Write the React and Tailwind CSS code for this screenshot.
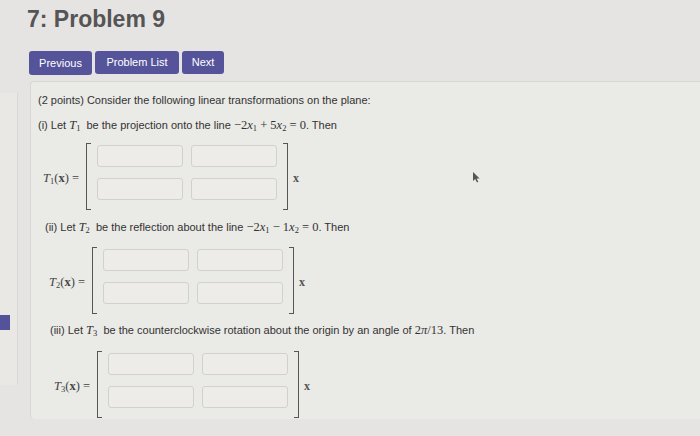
import React from "react";

const sans = { fontFamily: '"Liberation Sans", Arial, sans-serif' };

function M({ children }) {
  return (
    <span className="font-['Liberation_Serif',serif] text-[12.5px] text-[#333]">{children}</span>
  );
}

function I({ children, sub }) {
  return (
    <span>
      <i>{children}</i>
      {sub && <sub className="text-[8.5px] not-italic">{sub}</sub>}
    </span>
  );
}

function Box() {
  return <div className="h-[22px] w-[86px] rounded-[3px] border border-[#d2d1cd] bg-[#edece9]" />;
}

function Matrix({ sub, ml, mt }) {
  return (
    <div className={`flex items-center ${ml} ${mt}`}>
      <span className="mt-[3px] font-['Liberation_Serif',serif] text-[12.5px] text-[#444] mr-[7px]">
        <i>T</i>
        <sub className="text-[8.5px]">{sub}</sub>(<b>x</b>) =
      </span>
      <div className="h-[67px] w-[5px] border-y-[1.5px] border-l-[1.5px] border-[#555]" />
      <div className="mx-[6px] mb-[8px] grid grid-cols-2 gap-x-[8px] gap-y-[11px]">
        <Box />
        <Box />
        <Box />
        <Box />
      </div>
      <div className="h-[67px] w-[5px] border-y-[1.5px] border-r-[1.5px] border-[#555]" />
      <span className="ml-[5px] mt-[3px] font-['Liberation_Serif',serif] text-[12px] font-bold text-[#555]">x</span>
    </div>
  );
}

export default function App() {
  return (
    <div className="relative flex h-[436px] w-[700px] overflow-hidden bg-[#e6e4e2]" style={sans}>
      <div className="flex w-[18px] shrink-0 flex-col">
        <div className="h-[93px]" />
        <div className="flex h-[292px] flex-col border-r border-[#d9d7d5] bg-[#e9e8e5]">
          <div className="h-[222px]" />
          <div className="h-[15px] w-[10px] bg-[#54539a]" />
        </div>
      </div>
      <div className="flex flex-1 flex-col pl-[9px]">
        <div className="h-[36px] pt-[5px] text-[23px] font-bold leading-[28px] text-[#555]">7: Problem 9</div>
        <div className="mt-[15px] ml-[2px] flex gap-[3px]">
          <div className="flex h-[24px] w-[63px] items-center justify-center rounded-[3px] bg-[#55549a] text-[11px] text-white">Previous</div>
          <div className="flex h-[23px] w-[84px] items-center justify-center rounded-[3px] bg-[#55549a] text-[11px] text-white">Problem List</div>
          <div className="flex h-[23px] w-[42px] items-center justify-center rounded-[3px] bg-[#55549a] text-[11px] text-white">Next</div>
        </div>
        <div className="mt-[6px] ml-[3px] flex h-[338px] flex-col rounded-l-[4px] border-t border-l border-[#d8d7d3] bg-[#eaeae6] pl-[7px] text-[11px] text-[#333]">
          <div className="mt-[11px] leading-[14px]">(2 points) Consider the following linear transformations on the plane:</div>
          <div className="mt-[10px] leading-[16px]">
            (i) Let <M><I sub="1">T</I></M> &nbsp;be the projection onto the line <M>−2<I sub="1">x</I> + 5<I sub="2">x</I> = 0</M>. Then
          </div>
          <Matrix sub="1" ml="ml-[5px]" mt="mt-[10px]" />
          <div className="mt-[9px] ml-[7px] leading-[16px]">
            (ii) Let <M><I sub="2">T</I></M> &nbsp;be the reflection about the line <M>−2<I sub="1">x</I> − 1<I sub="2">x</I> = 0</M>. Then
          </div>
          <Matrix sub="2" ml="ml-[11px]" mt="mt-[12px]" />
          <div className="mt-[8px] ml-[12px] leading-[16px]">
            (iii) Let <M><I sub="3">T</I></M> &nbsp;be the counterclockwise rotation about the origin by an angle of <M>2<i>π</i>/13</M>. Then
          </div>
          <Matrix sub="3" ml="ml-[16px]" mt="mt-[13px]" />
        </div>
      </div>
      <div className="absolute left-[472px] top-[172px] leading-none">
        <svg width="9" height="11" viewBox="0 0 9 11"><path d="M1 0 L1 9 L3.2 7 L5 10.5 L6.3 9.8 L4.6 6.5 L7.6 6.5 Z" fill="#555" /></svg>
      </div>
    </div>
  );
}
